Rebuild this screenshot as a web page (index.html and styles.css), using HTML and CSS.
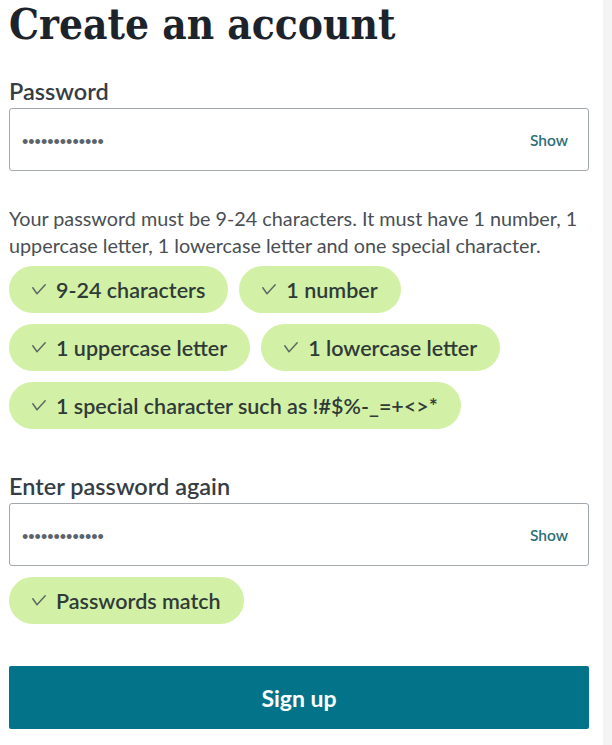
FILE: index.html
```html
<!DOCTYPE html>
<html lang="en">
<head>
<meta charset="utf-8">
<title>Create an account</title>
<link rel="stylesheet" href="styles.css">
</head>
<body>
<div class="page">
  <main class="form">
    <h1 class="title">Create an account</h1>

    <div class="field">
      <label class="label" for="pw">Password</label>
      <div class="input-wrap">
        <input id="pw" class="input" type="password" value="Secret#Pass12">
        <button class="show" type="button">Show</button>
      </div>
    </div>

    <p class="hint">Your password must be 9-24 characters. It must have 1 number, 1 uppercase letter, 1 lowercase letter and one special character.</p>

    <ul class="chips">
      <li class="chip"><svg class="check" viewBox="0 0 14 11" aria-hidden="true"><polyline points="0.8,3.8 5,9.8 13.2,0.8"/></svg>9-24 characters</li>
      <li class="chip"><svg class="check" viewBox="0 0 14 11" aria-hidden="true"><polyline points="0.8,3.8 5,9.8 13.2,0.8"/></svg>1 number</li>
      <li class="chip"><svg class="check" viewBox="0 0 14 11" aria-hidden="true"><polyline points="0.8,3.8 5,9.8 13.2,0.8"/></svg>1 uppercase letter</li>
      <li class="chip"><svg class="check" viewBox="0 0 14 11" aria-hidden="true"><polyline points="0.8,3.8 5,9.8 13.2,0.8"/></svg>1 lowercase letter</li>
      <li class="chip"><svg class="check" viewBox="0 0 14 11" aria-hidden="true"><polyline points="0.8,3.8 5,9.8 13.2,0.8"/></svg>1 special character such as !#$%-_=+&lt;&gt;*</li>
    </ul>

    <div class="field field-again">
      <label class="label" for="pw2">Enter password again</label>
      <div class="input-wrap">
        <input id="pw2" class="input" type="password" value="Secret#Pass12">
        <button class="show" type="button">Show</button>
      </div>
    </div>

    <ul class="chips chips-match">
      <li class="chip"><svg class="check" viewBox="0 0 14 11" aria-hidden="true"><polyline points="0.8,3.8 5,9.8 13.2,0.8"/></svg>Passwords match</li>
    </ul>

    <button class="submit" type="submit">Sign up</button>
  </main>
  <div class="track"></div>
</div>
</body>
</html>
```

FILE: styles.css
```css
html, body {
  margin: 0;
  padding: 0;
  background: #ffffff;
}

.page {
  display: flex;
  min-height: 100vh;
}

.form {
  flex: 1;
  padding: 0 14px 0 9px;
  font-family: "Lato", "Liberation Sans", sans-serif;
  color: #343b42;
}

.track {
  width: 9px;
  background: #f4f4f4;
}

.title {
  margin: 0;
  font-family: "DejaVu Serif Condensed", "DejaVu Serif", serif;
  font-stretch: condensed;
  font-weight: 700;
  font-size: 42px;
  line-height: 49px;
  color: #1d232b;
}

.field {
  margin-top: 29px;
}

.label {
  display: block;
  font-size: 23.5px;
  line-height: 26px;
  font-weight: 600;
  color: #363d44;
  margin-bottom: 4px;
}

.input-wrap {
  display: flex;
  align-items: center;
  height: 63px;
  box-sizing: border-box;
  border: 1px solid #a3a8ad;
  border-radius: 3px;
  background: #fff;
}

.input {
  flex: 1;
  min-width: 0;
  box-sizing: border-box;
  border: 0;
  outline: none;
  background: transparent;
  padding: 5px 0 0 12px;
  font-family: "Liberation Sans", sans-serif;
  font-size: 18px;
  color: #5b646d;
  height: 100%;
}

.show {
  border: 0;
  background: transparent;
  padding: 0 20px 0 10px;
  font-family: "Lato", sans-serif;
  font-size: 15.5px;
  font-weight: 600;
  color: #2d6f78;
  cursor: pointer;
}

.hint {
  margin: 34px 0 0;
  font-size: 19.8px;
  line-height: 27px;
  color: #4a4f54;
}

.chips {
  list-style: none;
  margin: 7px 0 0;
  padding: 0;
  display: flex;
  flex-wrap: wrap;
  gap: 11px;
}

.chip {
  display: flex;
  align-items: center;
  gap: 10px;
  height: 47px;
  padding: 0 23px;
  border-radius: 24px;
  background: #d3f0a7;
  font-size: 21.5px;
  font-weight: 600;
  color: #2f3b37;
}

.check {
  width: 14px;
  height: 11px;
  fill: none;
  stroke: #5d6b63;
  stroke-width: 1.5;
  stroke-linecap: round;
  stroke-linejoin: round;
}

.field-again {
  margin-top: 44px;
}

.chips-match {
  margin-top: 11px;
}

.submit {
  display: block;
  width: 100%;
  height: 63px;
  margin-top: 42px;
  border: 0;
  border-radius: 2px;
  background: #03738a;
  color: #ffffff;
  font-family: "Lato", sans-serif;
  font-size: 23px;
  font-weight: 700;
  cursor: pointer;
}
```
